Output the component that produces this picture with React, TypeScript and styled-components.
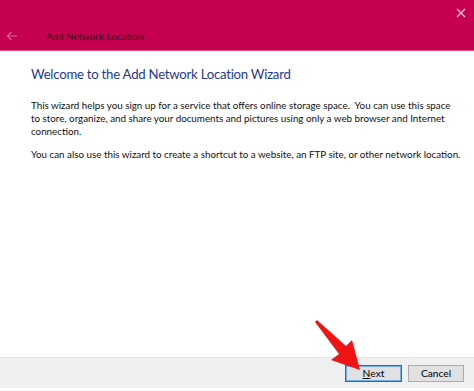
import React from 'react'
import styled, { createGlobalStyle } from 'styled-components'

const GlobalStyle = createGlobalStyle`
	html, body {
		margin: 0;
		padding: 0;
		background: #ffffff;
	}
	body {
		font-family: Lato, 'Noto Sans', sans-serif;
	}
`

export default function App() {
	return (
		<>
			<GlobalStyle />
			<Window>
				<TitleBar>
					<TopRow>
						<CloseButton aria-label='Close'>
							<svg width='10' height='10' viewBox='0 0 10 10'>
								<path d='M1 1 L9 9 M9 1 L1 9' stroke='#f7c4d8' strokeWidth='1.3' />
							</svg>
						</CloseButton>
					</TopRow>
					<NavRow>
						<BackButton aria-label='Back'>
							<svg width='12' height='10' viewBox='0 0 12 10'>
								<path d='M11 5 H1.5 M5.5 1 L1.5 5 L5.5 9' stroke='#e0679a' strokeWidth='1.1' fill='none' />
							</svg>
						</BackButton>
						<WindowTitle>Add Network Location</WindowTitle>
					</NavRow>
				</TitleBar>

				<Content>
					<Heading>Welcome to the Add Network Location Wizard</Heading>
					<Paragraph>
						This wizard helps you sign up for a service that offers online storage space.&nbsp; You can use this space
						<br />
						to store, organize, and share your documents and pictures using only a web browser and Internet
						<br />
						connection.
					</Paragraph>
					<Paragraph>
						You can also use this wizard to create a shortcut to a website, an FTP site, or other network location.
					</Paragraph>
				</Content>

				<Footer>
					<Pointer width='60' height='55' viewBox='0 0 60 55'>
						<path d='M4 5 L6 3 L35 29 L41 23 L49 53 L20 43 L28 37 Z' fill='#f01414' />
					</Pointer>
					<Button $primary>
						<u>N</u>ext
					</Button>
					<Button>Cancel</Button>
				</Footer>
				<BottomEdge />
			</Window>
		</>
	)
}

const Window = styled.div`
	width: 474px;
	height: 391px;
	display: flex;
	flex-direction: column;
	background: #ffffff;
	overflow: hidden;
`

const TitleBar = styled.div`
	height: 50px;
	background: #c4004f;
	border-bottom: 1px solid #e2478a;
	display: flex;
	flex-direction: column;
	flex-shrink: 0;
`

const TopRow = styled.div`
	height: 26px;
	display: flex;
	justify-content: flex-end;
	align-items: center;
	padding-right: 8px;
`

const CloseButton = styled.div`
	width: 10px;
	height: 10px;
	display: flex;
`

const NavRow = styled.div`
	height: 20px;
	display: flex;
	align-items: center;
	padding-left: 6px;
`

const BackButton = styled.div`
	width: 12px;
	height: 10px;
	display: flex;
	margin-right: 28px;
`

const WindowTitle = styled.span`
	font-family: Lato, sans-serif;
	font-size: 9.8px;
	font-weight: 500;
	color: #3a0418;
`

const Content = styled.div`
	flex: 1;
	padding: 13px 8px 0 31px;
`

const Heading = styled.h1`
	margin: 0 0 15px 0;
	font-family: Lato, sans-serif;
	font-weight: 400;
	font-size: 13.2px;
	line-height: 20px;
	letter-spacing: -0.25px;
	color: #1e3a94;
`

const Paragraph = styled.p`
	margin: 0 0 10px 0;
	font-family: Lato, sans-serif;
	font-size: 9.8px;
	line-height: 13px;
	white-space: nowrap;
	color: #111111;
`

const Footer = styled.div`
	position: relative;
	height: 30px;
	background: #f0f0f0;
	border-top: 1px solid #e4e4e4;
	display: flex;
	align-items: center;
	justify-content: flex-end;
	gap: 6px;
	padding-right: 10px;
	flex-shrink: 0;
`

const Pointer = styled.svg`
	position: absolute;
	left: 311px;
	top: -41px;
`

const Button = styled.div<{ $primary?: boolean }>`
	width: ${p => (p.$primary ? '55px' : '54px')};
	height: 15px;
	display: flex;
	align-items: center;
	justify-content: center;
	background: #e1e1e1;
	border: 1px solid ${p => (p.$primary ? '#0078d7' : '#adadad')};
	box-shadow: ${p => (p.$primary ? 'inset 0 0 0 1px #6fb1e8' : 'none')};
	font-family: Lato, sans-serif;
	font-size: 10.2px;
	color: #000000;
`

const BottomEdge = styled.div`
	height: 3px;
	background: #ffffff;
	flex-shrink: 0;
`
